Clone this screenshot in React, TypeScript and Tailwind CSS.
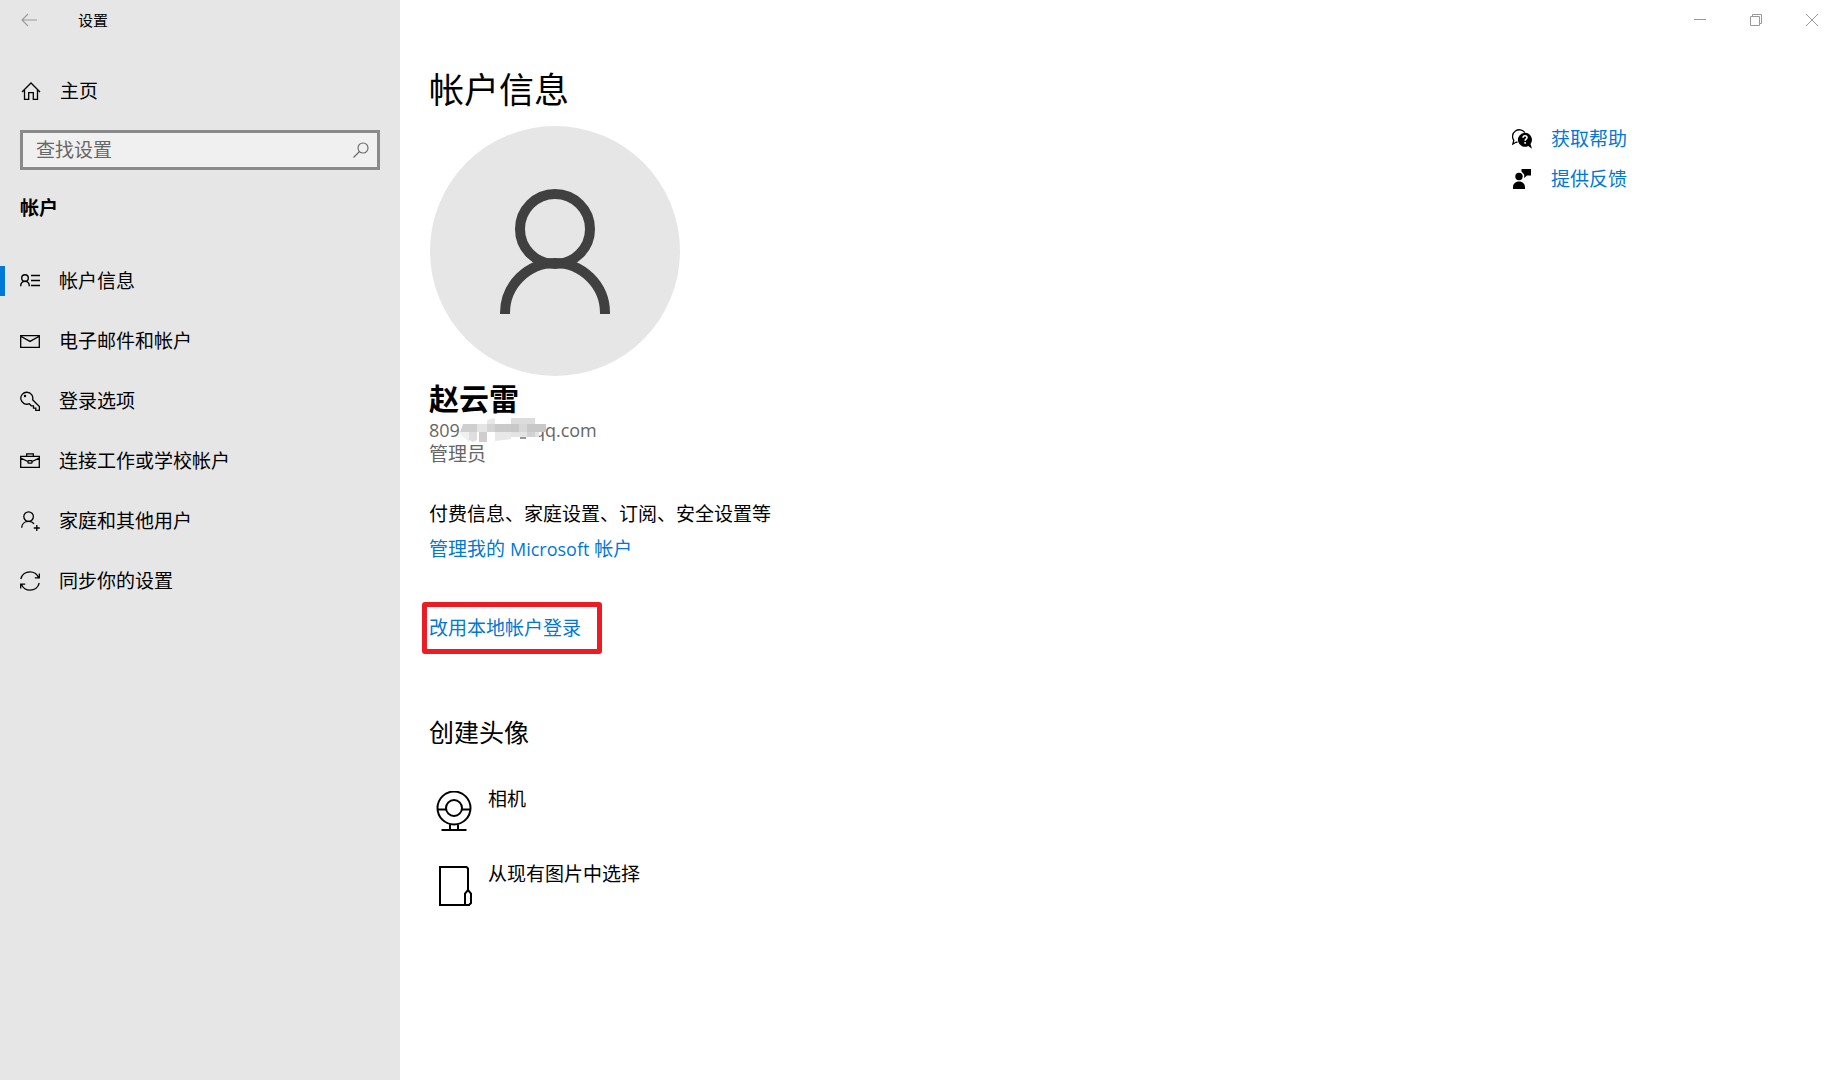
import React, { useState } from 'react';

interface IconProps {
  className?: string;
}

const BackIcon = ({ className }: IconProps) => (
  <svg className={className} viewBox="0 0 16 14" fill="none" stroke="currentColor" strokeWidth="1.1">
    <path d="M16 7H1M7 1L1 7l6 6" />
  </svg>
);

const HomeIcon = ({ className }: IconProps) => (
  <svg className={className} viewBox="0 0 20 20" fill="none" stroke="currentColor" strokeWidth="1.3">
    <path d="M1 11l9-9 9 9M3.5 9v9.3h4.2v-6.6h4.6v6.6h4.2V9" />
  </svg>
);

const SearchIcon = ({ className }: IconProps) => (
  <svg className={className} viewBox="0 0 16 16" fill="none" stroke="currentColor" strokeWidth="1.1">
    <circle cx="10" cy="6" r="5" />
    <path d="M6.5 9.5L.5 15.5" />
  </svg>
);

const AccountIcon = ({ className }: IconProps) => (
  <svg className={className} viewBox="0 0 20 20" fill="none" stroke="currentColor" strokeWidth="1.4">
    <circle cx="5" cy="7" r="3.3" />
    <path d="M.7 15.2c0-2.800 1.800-4.800 4.300-4.800s4.300 2 4.300 4.800M11 4.500h9M11 9.500h9M11 14.500h9" />
  </svg>
);

const MailIcon = ({ className }: IconProps) => (
  <svg className={className} viewBox="0 0 20 20" fill="none" stroke="currentColor" strokeWidth="1.3">
    <path d="M.7 4.600h18.600v11.800H.7zM.7 5.200L10 10.400l9.300-5.200" />
  </svg>
);

const KeyIcon = ({ className }: IconProps) => (
  <svg className={className} viewBox="0 0 20 20" fill="none" stroke="currentColor" strokeWidth="1.3">
    <path d="M12.600 8.800l6.800 6.800v3.800h-3.600v-2.300h-2.300v-2.300h-2.200l-2-2.100A6 6 0 1 1 12.600 8.800z" />
    <circle cx="5" cy="5" r="1.200" fill="currentColor" stroke="none" />
  </svg>
);

const BriefcaseIcon = ({ className }: IconProps) => (
  <svg className={className} viewBox="0 0 20 20" fill="none" stroke="currentColor" strokeWidth="1.3">
    <path d="M.7 5.400h18.600v11H.7zM6.700 5.400V2.800h6.600v2.600M.7 7.200l7.200 3.300M19.300 7.200l-7.200 3.300" />
    <rect x="8" y="9.600" width="4" height="2.600" rx="0.6" />
  </svg>
);

const FamilyIcon = ({ className }: IconProps) => (
  <svg className={className} viewBox="0 0 20 20" fill="none" stroke="currentColor" strokeWidth="1.3">
    <circle cx="8.600" cy="5.600" r="4.800" />
    <path d="M1.700 16.800c0-3.900 2.900-6.400 6.900-6.400 2.400 0 4.300.9 5.400 2.600M16.800 14v6M13.800 17h6" />
  </svg>
);

const SyncIcon = ({ className }: IconProps) => (
  <svg className={className} viewBox="0 0 20 20" fill="none" stroke="currentColor" strokeWidth="1.3">
    <path d="M.8 8C1.700 3.800 5.400.8 10 .8c3.800 0 7 2.200 8.600 5.700M19.300 2.500v4.400h-4.500" />
    <path d="M19.200 12c-.9 4.200-4.600 7.200-9.200 7.200-3.800 0-7-2.200-8.600-5.700M.7 17.500v-4.400h4.500" />
  </svg>
);

const HelpIcon = ({ className }: IconProps) => (
  <svg className={className} viewBox="0 0 20 20">
    <path
      d="M5.500 13l-1.500.3L.8 15l1-3.600A6.200 6.200 0 1 1 12.800 3.600"
      fill="none"
      stroke="currentColor"
      strokeWidth="1.300"
    />
    <path d="M13 3.800a7 7 0 1 0 3.200 13.200l3.800 2.700-1.500-4.700A7 7 0 0 0 13 3.800z" fill="currentColor" />
    <path
      d="M11 8.800c.1-1.300.9-2 2-2 1.200 0 2 .8 2 1.800 0 1.500-1.900 1.600-1.900 3.200M13.100 13v1.700"
      fill="none"
      stroke="#fff"
      strokeWidth="1.600"
    />
  </svg>
);

const FeedbackIcon = ({ className }: IconProps) => (
  <svg className={className} viewBox="0 0 20 20" fill="currentColor">
    <circle cx="7" cy="7.500" r="3.700" />
    <path d="M1 20v-1.500c0-3.600 2.300-6 6-6s6 2.400 6 6V20zM9.500 0H19v6.500h-4l-2.800 2.500V5.500L9.500 2.500z" />
  </svg>
);

const UserIcon = ({ className }: IconProps) => (
  <svg className={className} viewBox="0 0 110 126" fill="none" stroke="currentColor" strokeWidth="10">
    <circle cx="55" cy="41" r="35" />
    <path d="M5 126v-1a50 50 0 0 1 100 0v1" />
  </svg>
);

const CameraIcon = ({ className }: IconProps) => (
  <svg className={className} viewBox="0 0 40 40" fill="none" stroke="currentColor" strokeWidth="2">
    <circle cx="20" cy="17" r="16.500" />
    <circle cx="20" cy="17" r="8" />
    <path d="M3.500 18.500H12M28 18.500h8.500M16 33.500V38M24 33.500V38M7.500 39h25" />
  </svg>
);

const PictureIcon = ({ className }: IconProps) => (
  <svg className={className} viewBox="0 0 40 40" fill="none" stroke="currentColor" strokeWidth="2">
    <path d="M34 25V2.500L32.500 1H6v38h29.500" />
    <path d="M31 39V27.500l3-3.500 3 3.500V37l-2 2z" />
  </svg>
);

const navItems = [
  { id: 'info', label: '帐户信息', icon: AccountIcon },
  { id: 'email', label: '电子邮件和帐户', icon: MailIcon },
  { id: 'signin', label: '登录选项', icon: KeyIcon },
  { id: 'work', label: '连接工作或学校帐户', icon: BriefcaseIcon },
  { id: 'family', label: '家庭和其他用户', icon: FamilyIcon },
  { id: 'sync', label: '同步你的设置', icon: SyncIcon },
];

const Sidebar: React.FC = () => {
  const [active, setActive] = useState<string>('info');
  const [query, setQuery] = useState('');

  return (
    <aside className="w-[400px] shrink-0 bg-[#e6e6e6]">
      <div className="flex h-10 items-center">
        <button aria-label="返回" className="ml-[21px] text-[#999]">
          <BackIcon className="h-[14px] w-4" />
        </button>
        <span className="ml-[41px] text-[15px]">设置</span>
      </div>

      <a href="#home" className="mt-[21px] flex h-[60px] items-center gap-[19px] pl-[21px]">
        <HomeIcon className="h-5 w-5" />
        主页
      </a>

      <div className="relative mx-5 mt-[9px]">
        <input
          type="text"
          aria-label="查找设置"
          placeholder="查找设置"
          value={query}
          onChange={e => setQuery(e.target.value)}
          className="block h-10 w-full border-3 border-[#8a8a8a] bg-[#f0f0f0] pr-10 pl-[13px] outline-none placeholder:text-[#666]"
        />
        <SearchIcon className="absolute top-3 right-[11px] h-4 w-4 text-[#666]" />
      </div>

      <h2 className="mt-[26px] pl-5 font-bold">帐户</h2>

      <nav className="mt-[31px]">
        {navItems.map(({ id, label, icon: Icon }) => (
          <button
            key={id}
            onClick={() => setActive(id)}
            className="flex h-[60px] w-full items-center text-left"
          >
            <span className={`h-[30px] w-[5px] ${active === id ? 'bg-[#0078d7]' : ''}`} />
            <Icon className="ml-[15px] h-5 w-5" />
            <span className="ml-[19px]">{label}</span>
          </button>
        ))}
      </nav>
    </aside>
  );
};

const WindowControls: React.FC = () => (
  <div className="flex h-10 justify-end text-[#999]">
    <button aria-label="最小化" className="flex w-14 items-center justify-center">
      <svg className="h-3 w-3" viewBox="0 0 12 12" stroke="currentColor">
        <path d="M0 5.500h12" />
      </svg>
    </button>
    <button aria-label="还原" className="flex w-14 items-center justify-center">
      <svg className="h-3 w-3" viewBox="0 0 12 12" fill="none" stroke="currentColor">
        <path d="M.5 2.500h9v9h-9zM2.500 2.500v-2h9v9h-2" />
      </svg>
    </button>
    <button aria-label="关闭" className="flex w-14 items-center justify-center">
      <svg className="h-3 w-3" viewBox="0 0 12 12" stroke="currentColor">
        <path d="M0 0l12 12M12 0L0 12" />
      </svg>
    </button>
  </div>
);

// middle of the address is covered by mosaic blocks
const MaskedEmail: React.FC = () => (
  <p className="relative text-lg leading-6 text-[#666]">
    809<span className="inline-block w-[74px]" />qq.com
    <svg className="absolute top-0 left-[31px] h-6 w-[88px]" viewBox="0 0 88 24">
      <path d="M3 6h26v8H0z" fill="#cfcfcf" />
      <path d="M0 14h9v10L0 16z" fill="#f0f0f0" />
      <path d="M9 14h8v8l-4 2-4-2z" fill="#dedede" />
      <path d="M17 6h10v8H17z" fill="#e4e4e4" />
      <path d="M19 14h8v10h-8z" fill="#cecece" />
      <path d="M27 2l8-2v14h-8z" fill="#e8e8e8" />
      <path d="M27 6h8v8h-8z" fill="#d4d4d4" />
      <path d="M35 14h16v7l-16 2z" fill="#e8e8e8" />
      <path d="M35 6h16v8H35z" fill="#cacaca" />
      <path d="M51 0h24v6H51z" fill="#dcdcdc" />
      <path d="M51 6h35v8H51z" fill="#c8c8c8" />
      <path d="M59 6h8v8h-8z" fill="#d8d8d8" />
      <path d="M51 14h28v5H51z" fill="#e4e4e4" />
      <path d="M67 14h8v5h-8z" fill="#d2d2d2" />
      <path d="M60 19h6v2h-6z" fill="#999" />
    </svg>
  </p>
);

const App: React.FC = () => {
  return (
    <div className="flex min-h-screen bg-white font-['Open_Sans','Noto_Sans_CJK_SC',sans-serif] text-[19px] leading-6 text-black">
      <Sidebar />

      <div className="flex-1">
        <WindowControls />

        <div className="flex justify-between pl-[29px]">
          <main className="mt-[26px]">
            <h1 className="text-[35px] leading-[48px]">帐户信息</h1>

            <div className="mt-3 ml-px flex h-[250px] w-[250px] justify-center rounded-full bg-[#e6e6e6] pt-[62px] text-[#404040]">
              <UserIcon className="h-[126px] w-[110px]" />
            </div>

            <p className="mt-1 text-[30px] leading-[38px] font-bold">赵云雷</p>
            <MaskedEmail />
            <p className="text-[#666]">管理员</p>

            <p className="mt-9">付费信息、家庭设置、订阅、安全设置等</p>
            <a href="#manage" className="mt-[11px] block text-[#0078d7]">
              管理我的 <span className="text-lg leading-6">Microsoft</span> 帐户
            </a>

            <a
              href="#local"
              className="mt-[41px] -ml-[7px] flex h-[52px] w-[180px] items-center rounded-[3px] border-5 border-[#ed1c24] pl-[2px] text-[#0078d7]"
            >
              改用本地帐户登录
            </a>

            <h2 className="mt-[62px] text-[25px] leading-8">创建头像</h2>

            <div className="mt-[39px] flex flex-col gap-[27px]">
              <button className="flex h-12 gap-[14px] pl-[5px] text-left">
                <CameraIcon className="mt-1 h-10 w-10" />
                <span>相机</span>
              </button>
              <button className="flex h-12 gap-[14px] pl-[5px] text-left">
                <PictureIcon className="mt-1 h-10 w-10" />
                <span>从现有图片中选择</span>
              </button>
            </div>
          </main>

          <aside className="mt-[87px] flex w-[328px] flex-col gap-4">
            <a href="#help" className="flex items-center gap-[19px] text-[#0078d7]">
              <HelpIcon className="h-5 w-5 text-black" />
              获取帮助
            </a>
            <a href="#feedback" className="flex items-center gap-[19px] text-[#0078d7]">
              <FeedbackIcon className="h-5 w-5 text-black" />
              提供反馈
            </a>
          </aside>
        </div>
      </div>
    </div>
  );
};

export default App;
